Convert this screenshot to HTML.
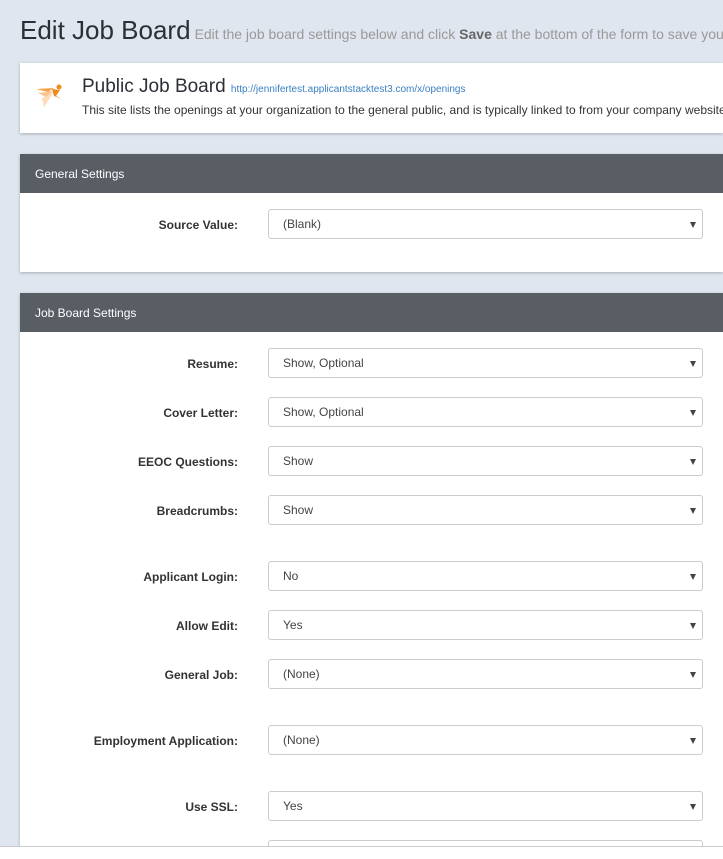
<!DOCTYPE html>
<html><head><style>
*{box-sizing:border-box;margin:0;padding:0}
html,body{width:723px;height:859px;overflow:hidden}
body{background:#dfe6ef;font-family:"Liberation Sans",sans-serif;position:relative;color:#333}
.abs{position:absolute}
h1{position:absolute;left:20px;top:15px;width:703px;overflow:hidden;font-weight:normal;font-size:26px;color:#2b2f36;white-space:nowrap}
h1 span{font-size:14px;color:#999;margin-left:4px}
h1 b{color:#666}
.card{position:absolute;left:20px;width:703px;overflow:hidden;background:#fff;box-shadow:0 1px 3px rgba(0,0,0,.25)}
.hd{background:#595d64;color:#fff;font-size:12px;height:39px;line-height:40px;padding-left:15px}
.lbl{position:absolute;right:485px;font-weight:bold;font-size:12px;color:#333;white-space:nowrap}
.sel{position:absolute;left:268px;width:435px;height:30px;border:1px solid #ccc;border-radius:3px;background:#fff;font-size:12px;line-height:29px;padding-left:14px;color:#444}
.sel:after{content:"";position:absolute;right:6px;top:12px;border-left:3px solid transparent;border-right:3px solid transparent;border-top:6px solid #444}
</style></head><body>
<h1>Edit Job Board<span>Edit the job board settings below and click <b>Save</b> at the bottom of the form to save your changes.</span></h1>
<div class="card" style="top:63px;height:70px">
<svg class="abs" style="left:14px;top:20px" width="30" height="26" viewBox="0 0 30 26"><path d="M2 6 L20 5 L14 9 Z" fill="#f6a04a"/><path d="M4 10 L20 8 L12 14 Z" fill="#f8b873" opacity=".8"/><path d="M8 15 L19 10 L10 24 Z" fill="#fbd2a6" opacity=".8"/><circle cx="25" cy="4" r="2.5" fill="#f08a1c"/><path d="M18 6 L26 7 L22 13 L28 16 L20 13 Z" fill="#f08a1c"/></svg>
<div class="abs" style="left:62px;top:13px;font-size:19px;color:#2b2f36;white-space:nowrap">Public Job Board <span style="font-size:10px;color:#3a7fc4">http://jennifertest.applicantstacktest3.com/x/openings</span></div>
<div class="abs" style="left:62px;top:40px;font-size:12px;color:#333;white-space:nowrap">This site lists the openings at your organization to the general public, and is typically linked to from your company website.</div>
</div>
<div class="card" style="top:154px;height:118px"><div class="hd">General Settings</div></div>
<div class="lbl" style="top:218px">Source Value:</div><div class="sel" style="top:209px">(Blank)</div>
<div class="card" style="top:293px;height:560px"><div class="hd">Job Board Settings</div></div>
<div class="lbl" style="top:357px">Resume:</div><div class="sel" style="top:348px">Show, Optional</div>
<div class="lbl" style="top:406px">Cover Letter:</div><div class="sel" style="top:397px">Show, Optional</div>
<div class="lbl" style="top:455px">EEOC Questions:</div><div class="sel" style="top:446px">Show</div>
<div class="lbl" style="top:504px">Breadcrumbs:</div><div class="sel" style="top:495px">Show</div>
<div class="lbl" style="top:570px">Applicant Login:</div><div class="sel" style="top:561px">No</div>
<div class="lbl" style="top:619px">Allow Edit:</div><div class="sel" style="top:610px">Yes</div>
<div class="lbl" style="top:668px">General Job:</div><div class="sel" style="top:659px">(None)</div>
<div class="lbl" style="top:734px">Employment Application:</div><div class="sel" style="top:725px">(None)</div>
<div class="lbl" style="top:800px">Use SSL:</div><div class="sel" style="top:791px">Yes</div>
<div class="sel" style="top:840px"></div>
<div class="abs" style="left:0;top:846px;width:723px;height:13px;background:#fff;border-top:1px solid #ccc"></div>
</body></html>
